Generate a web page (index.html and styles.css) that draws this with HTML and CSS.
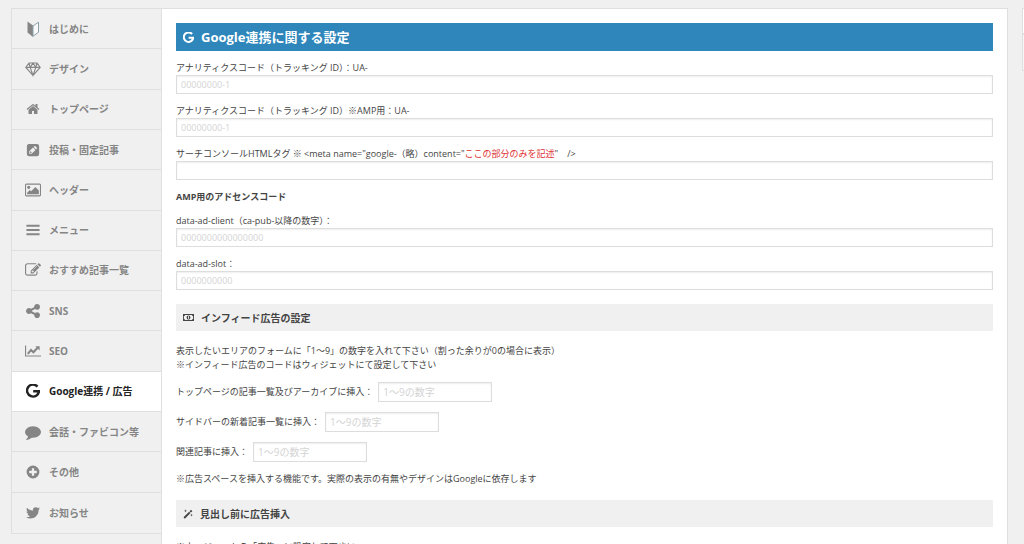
FILE: index.html
```html
<!DOCTYPE html>
<html lang="ja">
<head>
    <meta charset="UTF-8">
    <meta name="viewport" content="width=device-width, initial-scale=1.0">
    <title>Google連携 / 広告</title>
    <link rel="stylesheet" href="styles.css">
</head>
<body>

<div class="wrap">
    <nav class="tabs">
        <a href="#start"><svg class="icon wide" viewBox="0 0 16 16"><path d="M2.500 .5L8 4.500V16l-5.500-4.500z"/><path d="M13.500 1.200L8 5v10.200l5.500-4z" fill="#fafafa" stroke="#8aa0aa"/></svg>はじめに</a>
        <a href="#design"><svg class="icon wide" viewBox="0 0 20 18"><path d="M5 1.500h10L19 7l-9 10L1 7zM1 7h18M5 1.500L6.500 7 10 17l3.500-10L15 1.500M6.500 7L10 1.500 13.500 7" fill="none" stroke="currentColor" stroke-width="1.400"/></svg>デザイン</a>
        <a href="#top"><svg class="icon" viewBox="0 0 1792 1792"><path d="M1472 992v480q0 26-19 45t-45 19h-384v-384h-256v384h-384q-26 0-45-19t-19-45v-480q0-1 .5-3t.5-3l575-474 575 474q1 2 1 6zm223-69l-62 74q-8 9-21 11h-3q-13 0-21-7l-692-577-692 577q-12 8-24 7-13-2-21-11l-62-74q-8-10-7-23.5t11-21.5l719-599q32-26 76-26t76 26l244 204v-195q0-14 9-23t23-9h192q14 0 23 9t9 23v408l219 182q10 8 11 21.500t-7 23.500z"/></svg>トップページ</a>
        <a href="#post"><svg class="icon" viewBox="0 0 16 16"><path fill-rule="evenodd" d="M3.500 1h9A2.500 2.500 0 0 1 15 3.500v9a2.500 2.500 0 0 1-2.500 2.500h-9A2.500 2.500 0 0 1 1 12.500v-9A2.500 2.500 0 0 1 3.500 1zM3.700 12.300h2.800l4.300-4.300L8 5.200 3.700 9.500zM8.700 4.500l2.800 2.800.9-.9a.8.8 0 0 0 0-1.100L10.700 3.600a.8.8 0 0 0-1.100 0zM4.700 10l.6-.6 1.300 1.300-.6.6H4.700z"/></svg>投稿・固定記事</a>
        <a href="#header"><svg class="icon wide" viewBox="-64 0 1920 1792"><path d="M576 576q0 80-56 136t-136 56-136-56-56-136 56-136 136-56 136 56 56 136zm1024 384v448h-1408v-192l320-320 160 160 512-512zm96-704h-1600q-13 0-22.500 9.500t-9.500 22.500v1216q0 13 9.500 22.500t22.500 9.500h1600q13 0 22.500-9.500t9.500-22.500v-1216q0-13-9.500-22.500t-22.500-9.500zm160 32v1216q0 66-47 113t-113 47h-1600q-66 0-113-47t-47-113v-1216q0-66 47-113t113-47h1600q66 0 113 47t47 113z"/></svg>ヘッダー</a>
        <a href="#menu"><svg class="icon" viewBox="0 0 16 16"><path d="M.5 2h15v2.400H.5zM.5 6.800h15v2.400H.5zM.5 11.600h15V14H.5z"/></svg>メニュー</a>
        <a href="#recommend"><svg class="icon wide" viewBox="0 0 1792 1792"><path d="M888 1184l116-116-152-152-116 116v56h96v96h56zm440-720q-16-16-33 1l-350 350q-17 17-1 33t33-1l350-350q17-17 1-33zm80 594v190q0 119-84.500 203.500t-203.500 84.500h-832q-119 0-203.500-84.500t-84.500-203.500v-832q0-119 84.500-203.500t203.500-84.500h832q63 0 117 25 15 7 18 23 3 17-9 29l-49 49q-14 14-32 8-23-6-45-6h-832q-66 0-113 47t-47 113v832q0 66 47 113t113 47h832q66 0 113-47t47-113v-126q0-13 9-22l64-64q15-15 35-7t20 29zm-96-738l288 288-672 672h-288v-288zm444 132l-92 92-288-288 92-92q28-28 68-28t68 28l152 152q28 28 28 68t-28 68z"/></svg>おすすめ記事一覧</a>
        <a href="#sns"><svg class="icon" viewBox="128 128 1536 1536"><path d="M1344 1024q133 0 226.500 93.500t93.500 226.500-93.500 226.500-226.500 93.500-226.500-93.500-93.500-226.500q0-12 2-34l-360-180q-92 86-218 86-133 0-226.500-93.500t-93.500-226.500 93.500-226.500 226.500-93.500q126 0 218 86l360-180q-2-22-2-34 0-133 93.500-226.500t226.500-93.500 226.500 93.500 93.500 226.500-93.500 226.500-226.500 93.500q-126 0-218-86l-360 180q2 22 2 34t-2 34l360 180q92-86 218-86z"/></svg>SNS</a>
        <a href="#seo"><svg class="icon wide" viewBox="0 0 20 16"><path d="M0 1h1.400v12.600H20V15H0z"/><path d="M3.500 11.500l4-4.700 3 2.800 5-5.300" fill="none" stroke="currentColor" stroke-width="2.500"/><path d="M13 2h5.300v5.300z"/></svg>SEO</a>
        <a href="#google" class="active"><svg class="icon" viewBox="1 1 14 14"><path d="M12.500 3.600A6 6 0 1 0 14 8.200H8.200" fill="none" stroke="currentColor" stroke-width="2.400"/></svg>Google連携 / 広告</a>
        <a href="#talk"><svg class="icon wide" viewBox="0 0 1792 1792"><path d="M1792 896q0 174-120 321.500t-326 233-450 85.500q-70 0-145-8-198 175-460 242-49 14-114 22-17 2-30.500-9t-17.500-29v-1q-3-4-.5-12t2-10 4.500-9.500l6-9 7-8.500 8-9q7-8 31-34.500t34.500-38 31-39.500 32.500-51 27-59 26-76q-157-89-247.500-220t-90.500-281q0-174 120-321.500t326-233 450-85.500 450 85.500 326 233 120 321.500z"/></svg>会話・ファビコン等</a>
        <a href="#other"><svg class="icon" viewBox="0 0 16 16"><path fill-rule="evenodd" d="M8 .7a7.300 7.300 0 1 1 0 14.600A7.300 7.300 0 0 1 8 .7zM6.700 3.700v3h-3v2.600h3v3h2.600v-3h3V6.700h-3v-3z"/></svg>その他</a>
        <a href="#news"><svg class="icon" viewBox="108 128 1576 1576"><path d="M1684 408q-67 98-162 167 1 14 1 42 0 130-38 259.500t-115.500 248.500-184.500 210.500-258 146-323 54.500q-271 0-496-145 35 4 78 4 225 0 401-138-105-2-188-64.500t-114-159.500q33 5 61 5 43 0 85-11-112-23-185.500-111.500t-73.500-205.500v-4q68 38 146 41-66-44-105-115t-39-154q0-88 44-163 121 149 294.500 238.500t371.500 99.500q-8-38-8-74 0-134 94.500-228.500t228.500-94.500q140 0 236 102 109-21 205-78-37 115-142 178 93-10 186-50z"/></svg>お知らせ</a>
    </nav>

    <main class="panel">
        <h2><svg class="icon" viewBox="1 1 14 14"><path d="M12.500 3.600A6 6 0 1 0 14 8.200H8.200" fill="none" stroke="currentColor" stroke-width="2.600"/></svg>Google連携に関する設定</h2>

        <div class="field">
            <label for="ua">アナリティクスコード（トラッキング ID）：UA-</label>
            <input type="text" id="ua" placeholder="00000000-1">
        </div>
        <div class="field">
            <label for="ua-amp">アナリティクスコード（トラッキング ID）※AMP用：UA-</label>
            <input type="text" id="ua-amp" placeholder="00000000-1">
        </div>
        <div class="field">
            <label for="console">サーチコンソールHTMLタグ ※ &lt;meta name="google-（略）content="<span class="red">ここの部分のみを記述</span>"　/&gt;</label>
            <input type="text" id="console">
        </div>
        <p class="bold">AMP用のアドセンスコード</p>
        <div class="field">
            <label for="client">data-ad-client（ca-pub-以降の数字）：</label>
            <input type="text" id="client" placeholder="0000000000000000">
        </div>
        <div class="field">
            <label for="slot">data-ad-slot：</label>
            <input type="text" id="slot" placeholder="0000000000">
        </div>

        <h3><svg class="icon" viewBox="0 0 16 16"><path fill-rule="evenodd" d="M0 3h16v10H0zM3 4.300A2 2 0 0 1 1.300 6v4A2 2 0 0 1 3 11.700h10A2 2 0 0 1 14.700 10V6A2 2 0 0 1 13 4.300zM8 5c1.700 0 2.700 1.400 2.700 3S9.700 11 8 11 5.300 9.600 5.300 8 6.300 5 8 5zM7.300 6.300v3.400h1.400V6.300z"/></svg>インフィード広告の設定</h3>
        <p class="lead">表示したいエリアのフォームに「1～9」の数字を入れて下さい（割った余りが0の場合に表示）<br>※インフィード広告のコードはウィジェットにて設定して下さい</p>
        <div class="row">
            <label for="in-top">トップページの記事一覧及びアーカイブに挿入：</label>
            <input type="text" id="in-top" placeholder="1～9の数字">
        </div>
        <div class="row">
            <label for="in-side">サイドバーの新着記事一覧に挿入：</label>
            <input type="text" id="in-side" placeholder="1～9の数字">
        </div>
        <div class="row">
            <label for="in-rel">関連記事に挿入：</label>
            <input type="text" id="in-rel" placeholder="1～9の数字">
        </div>
        <p>※広告スペースを挿入する機能です。実際の表示の有無やデザインはGoogleに依存します</p>

        <h3><svg class="icon small" viewBox="0 0 16 16"><path d="M.8 13.200L9.800 4.200l2.200 2.200L3 15.400zM10.500 3.500l2.300-2.300L15 3.400l-2.300 2.300zM4 .5L4.600 2.400 6.500 3l-1.900.6L4 5.500l-.6-1.900L1.500 3l1.900-.6zM13.500 7.500l.6 1.600 1.600.6-1.600.6-.6 1.600-.6-1.600-1.600-.6 1.600-.6z"/></svg>見出し前に広告挿入</h3>
        <p class="lead">※ウィジェットの「広告」に設定して下さい</p>
    </main>

    <aside class="side">
        <div class="box title"></div>
        <div class="box"></div>
    </aside>
</div>

</body>
</html>
```
FILE: styles.css
```css
* { box-sizing: border-box; }
body { margin: 0; height: 100vh; overflow: hidden; background: #f0f0f0; color: #444; font-family: "Open Sans", "Noto Sans CJK JP", sans-serif; font-size: 9px; line-height: 14px; }
.wrap { display: flex; align-items: flex-start; padding: 8px 0 0 11px; }
.icon { width: 14px; height: 14px; fill: currentColor; flex: none; }

/* left tabs */
.tabs { flex: none; width: 150px; min-height: 526px; display: grid; grid-auto-rows: 1fr; border: 1px solid #dfdfdf; border-right: none; }
.tabs a { display: flex; align-items: center; gap: 8px; padding-left: 13px; border-bottom: 1px solid #dfdfdf; color: #858585; font-size: 10px; font-weight: bold; text-decoration: none; }
.tabs a:last-child { border-bottom: none; }
.tabs a.active { background: #fff; color: #222; }
.tabs .icon { margin: 0 1px; }
.tabs .icon.wide { width: 16px; height: 16px; margin: 0; }

/* settings */
.panel { flex: 1; min-width: 0; min-height: 600px; padding: 14px; background: #fff; border: 1px solid #dfdfdf; }
h2, h3 { display: flex; align-items: center; margin: 0; }
h2 { gap: 7px; height: 28px; padding-left: 7px; background: #2e86bb; color: #fff; font-size: 13px; }
h2 .icon { width: 11px; height: 11px; }
h3 { gap: 7px; height: 27px; margin-top: 14px; padding-left: 7px; background: #f0f0f0; font-size: 10px; }
h3 .icon { width: 11px; height: 11px; }
h3 .icon.small { width: 10px; height: 10px; }
p { margin: 10px 0 0; }
.lead { margin-top: 13px; }
.bold { font-weight: bold; }
.red { color: #d33; }
.field { margin-top: 10px; }
.field label { display: block; }
.row { display: flex; align-items: center; gap: 5px; margin-top: 10px; }
input { display: block; width: 100%; height: 19px; padding: 0 4px; border: 1px solid #ddd; border-radius: 0; background: #fff; color: #333; box-shadow: inset 0 1px 2px rgba(0,0,0,0.07); font-family: inherit; font-size: 9px; }
.row input { width: 114px; height: 20px; font-size: 10px; }
input::placeholder { color: #d4d4d4; opacity: 1; }

/* right column, continues past the window */
.side { flex: none; width: 2px; margin-left: 14px; overflow: hidden; }
.box { width: 180px; height: 37px; background: #f6f6f6; border: 1px solid #dfdfdf; }
.box.title { height: 26px; background: #fff; }
```
